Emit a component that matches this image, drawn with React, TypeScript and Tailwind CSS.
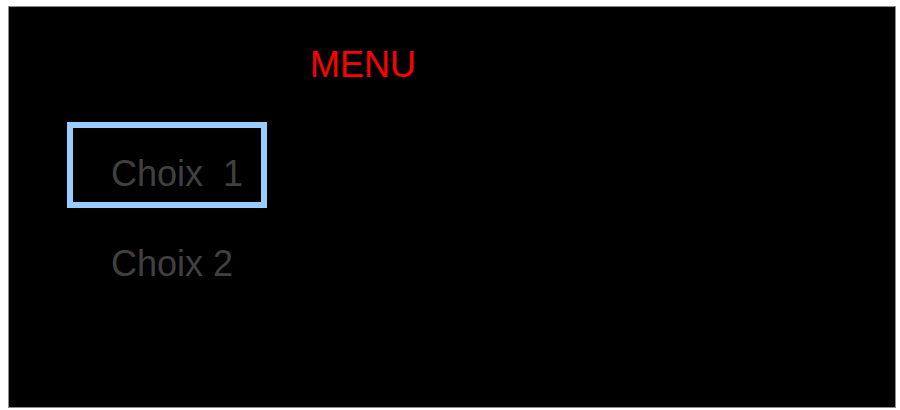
export default function App() {
  return (
    <div className="h-[410px] w-[900px] bg-white pl-[8px] pt-[6px]" style={{ fontFamily: '"Liberation Sans", Arial, sans-serif' }}>
      <div className="flex h-[402px] w-[888px] flex-col border border-[#8c8c8c] bg-black">
        <div className="ml-[301px] mt-[40px] text-[36px] leading-none text-[#ff0000]">MENU</div>
        <div className="ml-[58px] mt-[39px] h-[86px] w-[200px] border-[6px] border-[#99ccff] pl-[38px] pt-[28px] text-[36px] leading-none text-[#404040]">
          <span className="whitespace-pre">Choix  1</span>
        </div>
        <div className="ml-[102px] mt-[38px] text-[36px] leading-none text-[#404040]">Choix 2</div>
      </div>
    </div>
  );
}
